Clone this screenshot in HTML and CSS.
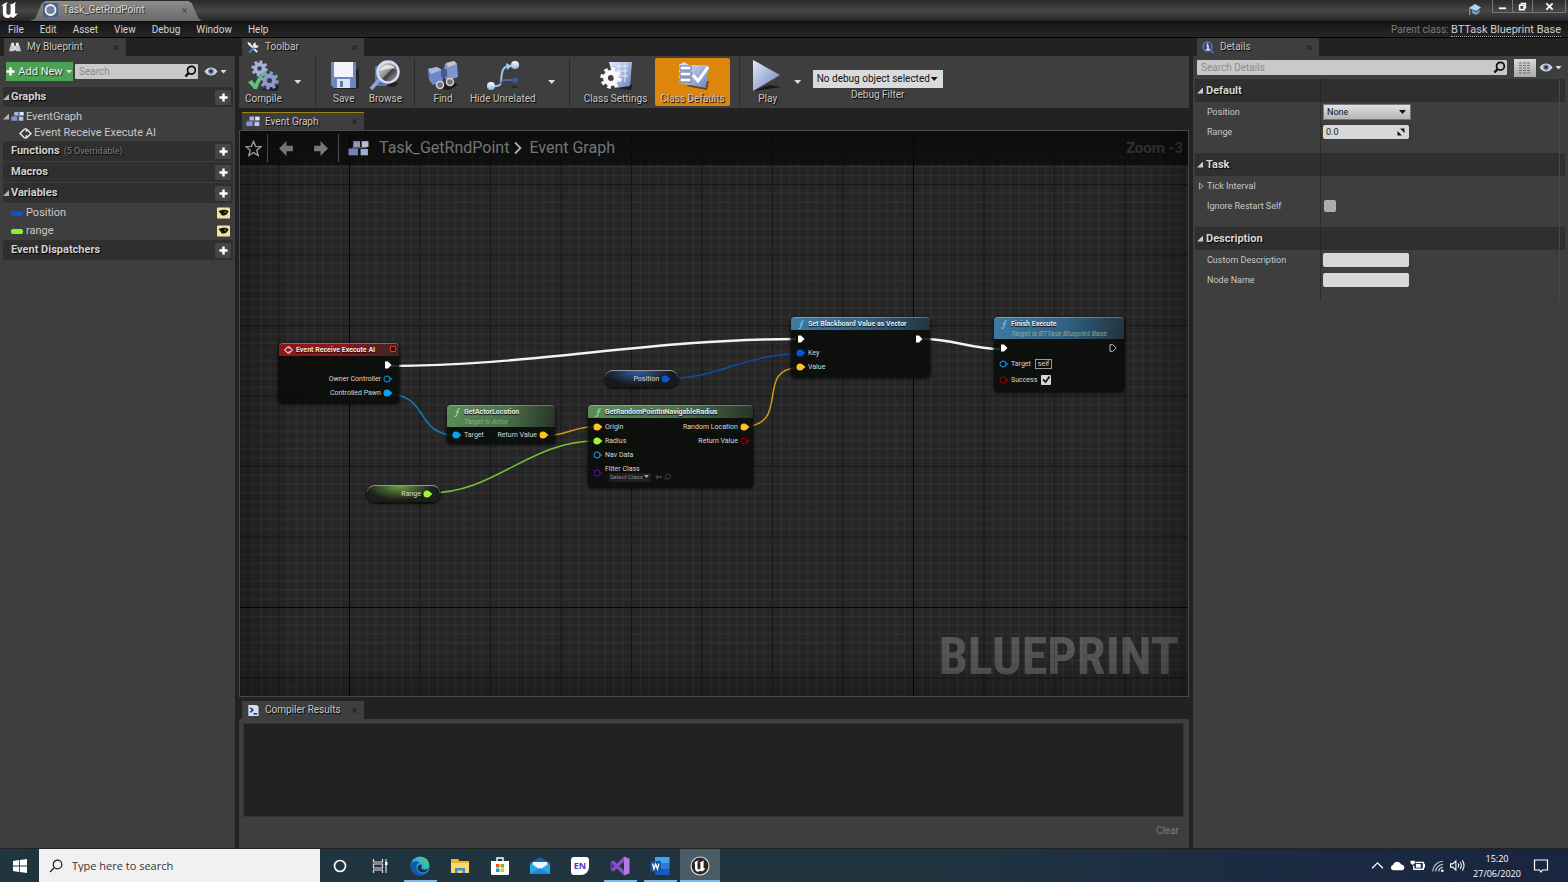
FILE: index.html
```
<!DOCTYPE html>
<html lang="en">
<head>
    <meta charset="UTF-8">
    <meta name="viewport" content="width=device-width, initial-scale=1.0">
    <title>Task_GetRndPoint</title>
    <link rel="stylesheet" href="styles.css">
</head>
<body>
    <!-- Shared symbols and gradients -->
    <svg class="defs" aria-hidden="true">
        <defs>
            <linearGradient id="steel" x1="0" y1="0" x2="1" y2="1">
                <stop offset="0" stop-color="#e4ebfa"/>
                <stop offset="1" stop-color="#6b80bd"/>
            </linearGradient>
            <linearGradient id="ball" x1="0" y1="0" x2="0" y2="1">
                <stop offset="0" stop-color="#ffffff"/>
                <stop offset="1" stop-color="#8fb4e0"/>
            </linearGradient>
            <linearGradient id="lens" x1="0" y1="0" x2="1" y2="1">
                <stop offset="0" stop-color="#f4f4f4"/>
                <stop offset="0.5" stop-color="#8a8a8a"/>
                <stop offset="0.55" stop-color="#3a3a3a"/>
                <stop offset="1" stop-color="#bdbdbd"/>
            </linearGradient>
            <linearGradient id="edge" x1="0" y1="1" x2="1" y2="0">
                <stop offset="0" stop-color="#1668c8"/>
                <stop offset="0.5" stop-color="#27a9e0"/>
                <stop offset="1" stop-color="#5bd86a"/>
            </linearGradient>
        </defs>
        <symbol id="i-close" viewBox="0 0 8 8"><path d="M1.5 1.5l5 5M6.5 1.5l-5 5" stroke="currentColor" stroke-width="1.2"/></symbol>
        <symbol id="i-plus" viewBox="0 0 10 10"><path d="M5 0.5v9M0.5 5h9" stroke="#fff" stroke-width="2.8"/></symbol>
        <symbol id="i-search" viewBox="0 0 14 14"><circle cx="8" cy="5.6" r="4.2" fill="none" stroke="#0a0a0a" stroke-width="1.8"/><path d="M5 8.6L1.6 12.4" stroke="#0a0a0a" stroke-width="2.6"/></symbol>
        <symbol id="i-eye" viewBox="0 0 16 10"><path d="M0.5 5C3 1.2 5.5 0.5 8 0.5S13 1.2 15.5 5C13 8.8 10.5 9.5 8 9.5S3 8.8 0.5 5z" fill="#d4d4d4"/><circle cx="8" cy="4.8" r="3.2" fill="#5e78a8"/><circle cx="8" cy="4.8" r="1.5" fill="#1d2740"/></symbol>
        <symbol id="i-eye-dark" viewBox="0 0 14 12"><rect width="14" height="12" rx="1" fill="#e9e6a4"/><path d="M1.5 4.5C4 2 9 1.6 12.500 4l-.6 1.200C11 8 8 9.200 5 8.400l-1-.8 1.200-.2C3.500 6.800 3 6 3 5.300z" fill="#141408"/><circle cx="8.800" cy="4.800" r=".7" fill="#e9e6a4"/></symbol>
        <symbol id="i-blocks" viewBox="0 0 20 16"><rect x="5" y="1" width="6.5" height="5.5" fill="#a9b7e2"/><rect x="13" y="1" width="6.5" height="5.5" fill="#dfe6fa"/><rect x="0.5" y="8" width="9" height="6.5" fill="#8395cf"/><rect x="12" y="8.5" width="7" height="6" fill="#b9c5ec"/><path d="M4 7.3h14" stroke="#8090c0"/></symbol>
        <symbol id="i-event" viewBox="0 0 14 12"><path d="M6 1L1 6l5 5M8 1l5 5-5 5" fill="none" stroke="#eee" stroke-width="1.6"/><path d="M8 1v3M8 8v3M6 1h2M6 11h2" stroke="#eee" stroke-width="1.6"/></symbol>
        <symbol id="i-ue" viewBox="0 0 20 20"><path d="M1 7C2.500 4 5 2.500 8 2.200c-1 1-1.600 1.800-1.600 3v7.600c0 1.300 1 2 2 2 .8 0 1.600-.4 2.200-1.200V6c0-.8-.5-1.200-1.300-1.400 2.400-.3 4.500-1.200 6.700-2.800-.6 1-.9 1.800-.9 3v7.400c0 1 .3 1.500 1.100 1.500.5 0 1-.3 1.600-.7-1.200 2.400-3 4.200-5.400 5l-1.600-1.600c-1 1-2 1.700-3.400 1.700-2.600 0-4.500-1.700-4.500-4.500V7c0-.9-.3-1.300-.8-1.300-.4 0-.8.4-1.100 1.300z" fill="currentColor"/></symbol>
        <symbol id="i-func" viewBox="0 0 8 10"><path d="M7.300 1.300C6 .4 5.200.8 4.900 2.300L3.700 7.800C3.400 9.300 2.400 9.700.9 8.900M2.400 4.200h3.700" fill="none" stroke="currentColor" stroke-width="1.3"/></symbol>
        <symbol id="pin-on" viewBox="0 0 10 8"><circle cx="4" cy="4" r="3.5" fill="currentColor"/><path d="M7 2l2.500 2L7 6z" fill="currentColor"/></symbol>
        <symbol id="pin-off" viewBox="0 0 10 8"><circle cx="4" cy="4" r="2.900" fill="#0008" stroke="currentColor" stroke-width="1.3"/><path d="M7.500 2.300L9.500 4 7.500 5.700z" fill="currentColor"/></symbol>
        <symbol id="exec-on" viewBox="0 0 10 8"><path d="M2 0.500h3L8.500 4 5 7.500H2z" fill="#fff"/></symbol>
        <symbol id="exec-off" viewBox="0 0 10 8"><path d="M2 0.700h2.800L8.200 4 4.800 7.300H2z" fill="none" stroke="#bbb"/></symbol>
        <symbol id="i-gear" viewBox="0 0 20 20"><circle cx="10" cy="10" r="8" fill="none" stroke="currentColor" stroke-width="3.5" stroke-dasharray="3.14 3.14"/><circle cx="10" cy="10" r="5" fill="none" stroke="currentColor" stroke-width="4.5"/></symbol>
    </svg>

    <header class="titlebar">
        <svg class="ue-logo" viewBox="0 0 20 20"><use href="#i-ue"/></svg>
        <div class="asset-tab">
            <svg width="15" height="14" viewBox="0 0 15 14"><rect width="15" height="14" fill="#456092"/><circle cx="7.5" cy="7" r="5" fill="#6f7f9c" stroke="#f2f2f2" stroke-width="1.8"/></svg>
            <span>Task_GetRndPoint</span>
            <button class="close" aria-label="Close"><svg><use href="#i-close"/></svg></button>
        </div>
        <div class="window-side">
            <svg class="cap" viewBox="0 0 14 14"><path d="M7 1l6 3.500L8 8 1 5z" fill="#b5d4f2"/><path d="M4 7l4 2 3.500-2.400v3.200L8 12l-4-2z" fill="#6f9bcb"/><path d="M1.800 5v7" stroke="#b48a5a" stroke-width="1.3"/></svg>
            <div class="window-buttons">
                <button aria-label="Minimize"><svg viewBox="0 0 10 10"><path d="M1 7h8" stroke="#fff" stroke-width="2"/></svg></button>
                <button aria-label="Restore"><svg viewBox="0 0 10 10"><path d="M3.500 3V1.500h5v5H7" fill="none" stroke="#fff" stroke-width="1.2"/><rect x="1.8" y="3.5" width="5" height="5" fill="none" stroke="#fff" stroke-width="1.8"/></svg></button>
                <button class="exit" aria-label="Close window"><svg viewBox="0 0 10 10"><path d="M1.500 1.500l7 7M8.500 1.500l-7 7" stroke="#fff" stroke-width="2"/></svg></button>
            </div>
        </div>
    </header>

    <nav class="menubar">
        <button>File</button>
        <button>Edit</button>
        <button>Asset</button>
        <button>View</button>
        <button>Debug</button>
        <button>Window</button>
        <button>Help</button>
        <p class="parent">Parent class: <a href="#">BTTask Blueprint Base</a></p>
    </nav>

    <main class="workspace">
        <!-- My Blueprint -->
        <section class="column">
            <div class="tab">
                <svg viewBox="0 0 14 14"><path d="M0.500 11l2-7L6 3v8zM8 3l3.500 1 2 7H8z" fill="#c9c9c9"/><path d="M3 2h3v3H3zM8 2h3v3H8zM6 5h2v5H6z" fill="#e6e6e6"/></svg>
                <h2>My Blueprint</h2>
                <button class="close" aria-label="Close"><svg><use href="#i-close"/></svg></button>
            </div>
            <div class="panel">
                <div class="search-row">
                    <button class="add-new"><svg viewBox="0 0 10 10"><use href="#i-plus"/></svg>Add New<i class="caret"></i></button>
                    <label class="search"><input type="text" placeholder="Search" aria-label="Search"><svg><use href="#i-search"/></svg></label>
                    <button class="view-options" aria-label="View options"><svg><use href="#i-eye"/></svg><i class="caret"></i></button>
                </div>
                <div class="group open"><h3>Graphs</h3><button aria-label="Add graph"><svg><use href="#i-plus"/></svg></button></div>
                <div class="tree open"><svg class="blocks"><use href="#i-blocks"/></svg>EventGraph</div>
                <div class="tree child"><svg class="event"><use href="#i-event"/></svg>Event Receive Execute AI</div>
                <div class="group"><h3>Functions</h3><small>(5 Overridable)</small><button aria-label="Add function"><svg><use href="#i-plus"/></svg></button></div>
                <div class="group"><h3>Macros</h3><button aria-label="Add macro"><svg><use href="#i-plus"/></svg></button></div>
                <div class="group open"><h3>Variables</h3><button aria-label="Add variable"><svg><use href="#i-plus"/></svg></button></div>
                <div class="variable"><i class="type key"></i>Position<button aria-label="Position visibility"><svg><use href="#i-eye-dark"/></svg></button></div>
                <div class="variable"><i class="type float"></i>range<button aria-label="range visibility"><svg><use href="#i-eye-dark"/></svg></button></div>
                <div class="group"><h3>Event Dispatchers</h3><button aria-label="Add dispatcher"><svg><use href="#i-plus"/></svg></button></div>
            </div>
        </section>

        <section class="column center">
            <!-- Toolbar -->
            <div class="tab">
                <svg viewBox="0 0 14 14"><path d="M3 3l8.500 9" stroke="#eee" stroke-width="2"/><path d="M1 1l3 1 1 2-1.500 1L2 4z" fill="#eee"/><path d="M11 4.500L3 12.500" stroke="#4d7fd0" stroke-width="2.2"/><path d="M10 1.500a3 3 0 1 0 3 3l-2 .6-1.400-1.500z" fill="#eee"/></svg>
                <h2>Toolbar</h2>
                <button class="close" aria-label="Close"><svg><use href="#i-close"/></svg></button>
            </div>
            <div class="toolbar">
                <button class="tool wide">
                    <svg viewBox="0 0 32 32"><path d="M12 30l18 1 3-6z" fill="#1f1f1f"/><svg x="4" y="0" width="17" height="17" color="#a3b3de"><use href="#i-gear"/></svg><svg x="13" y="11" width="19" height="19" color="#8b9bcf"><use href="#i-gear"/></svg><path d="M1 22l4-2 3 4c2-6 6-11 13-15-5 6-8 12-11 20H7z" fill="#5fc27b"/></svg>
                    Compile
                </button>
                <button class="more" aria-label="Compile options"><i class="caret"></i></button>
                <i class="rule"></i>
                <button class="tool">
                    <svg viewBox="0 0 32 32"><path d="M6 29h23l2-2V8z" fill="#222"/><path d="M3 2h25v26H6l-3-3z" fill="#6e85c3"/><path d="M6 2h19v15H6z" fill="#f1f4fc"/><path d="M9 19h13v9H9z" fill="#dbe2f4"/><path d="M12 21h3v6h-3z" fill="#6077b5"/></svg>
                    Save
                </button>
                <button class="tool">
                    <svg viewBox="0 0 32 32"><path d="M6 6h12v20H6z" fill="#5873b5"/><path d="M17 26l8 1 5-4-6-1z" fill="#1e1e1e"/><path d="M10 20L2 29" stroke="#8fa6d8" stroke-width="3.5"/><circle cx="19" cy="12" r="10.5" fill="url(#lens)" stroke="#d3dcf2" stroke-width="2.5"/><path d="M11 11c3-7 12-8 16-2-5-1-11 0-16 2z" fill="#fff" opacity="0.7"/></svg>
                    Browse
                </button>
                <i class="rule"></i>
                <button class="tool">
                    <svg viewBox="0 0 32 32"><path d="M8 28l14 2 9-5-6-4z" fill="#1d1d1d"/><path d="M1 9l9-2 5 3 1 12-10 3-4-5z" fill="#6f86c4"/><path d="M1 9l9-2 5 3-11 4z" fill="#a5b8e6"/><path d="M18 4l9-3 3 3 1 13-11 4-4-6z" fill="#8094cd"/><path d="M19 3l8-2 3 3-9 3z" fill="#d0bfc4"/><path d="M14 9h6v8h-6z" fill="#46598e"/><circle cx="13" cy="25" r="3.5" fill="#737373" stroke="#d2d2d2" stroke-width="1.5"/><circle cx="23" cy="22" r="3.5" fill="#737373" stroke="#d2d2d2" stroke-width="1.5"/></svg>
                    Find
                </button>
                <button class="tool wide">
                    <svg viewBox="0 0 32 32"><path d="M4 26c13 1 9-3 11-13 1-6 5-8 10-7" fill="none" stroke="#9cc6ea" stroke-width="2"/><path d="M13 24c2-5 6-4 12-4" fill="none" stroke="#5371a8" stroke-width="1.5"/><path d="M19 3l6 3-5 4z" fill="#9cc6ea"/><circle cx="4" cy="26" r="4" fill="url(#ball)"/><circle cx="28" cy="5" r="4" fill="url(#ball)"/><circle cx="28" cy="20" r="2.800" fill="#3d5b94"/><path d="M24 26l8 1-5 1z" fill="#1c1c1c"/></svg>
                    Hide Unrelated
                </button>
                <button class="more" aria-label="Hide options"><i class="caret"></i></button>
                <i class="rule"></i>
                <button class="tool wide">
                    <svg viewBox="0 0 32 32"><path d="M16 28l15 2 2-6z" fill="#1c1c1c"/><path d="M9 2h23l-2 24-14 2z" fill="url(#steel)"/><path d="M16 6h12M16 11h12M18 16h10M19 3v12M25 3v19" stroke="#e3eafa" stroke-width="1"/><svg x="0" y="7" width="22" height="22" color="#f7f7f7"><use href="#i-gear"/></svg></svg>
                    Class Settings
                </button>
                <button class="tool wide active">
                    <svg viewBox="0 0 32 32"><path d="M9 26l21 4 2-9z" fill="#6b4208"/><path d="M2 5l5-3 5 3h20l-3 23L2 23z" fill="url(#steel)"/><path d="M3 6h11v4H3zM3 12h11v4H3zM3 18h11v4H3z" fill="#fff" stroke="#5b6fa8"/><path d="M16 15l5 6L31 7" fill="none" stroke="#fff" stroke-width="3"/></svg>
                    Class Defaults
                </button>
                <i class="rule"></i>
                <button class="tool">
                    <svg viewBox="0 0 32 32"><path d="M2 31l27-4-12-2z" fill="#151515"/><path d="M1 0l27 15L1 31z" fill="url(#steel)"/></svg>
                    Play
                </button>
                <button class="more" aria-label="Play options"><i class="caret"></i></button>
                <div class="debug">
                    <span class="dropdown"><select id="debug"><option>No debug object selected</option></select></span>
                    <label for="debug">Debug Filter</label>
                </div>
            </div>

            <!-- Event Graph -->
            <div class="tab graph-tab">
                <svg viewBox="0 0 20 16"><use href="#i-blocks"/></svg>
                <h2>Event Graph</h2>
                <button class="close" aria-label="Close"><svg><use href="#i-close"/></svg></button>
            </div>
            <div class="graph">
                <svg class="grid">
                    <defs>
                        <pattern id="minor" x="109" y="53" width="70.5" height="70.5" patternUnits="userSpaceOnUse">
                            <path d="M9.300 0v71M18.100 0v71M26.900 0v71M35.700 0v71M44.600 0v71M53.400 0v71M62.200 0v71M0 9.300h71M0 18.100h71M0 26.900h71M0 35.700h71M0 44.600h71M0 53.400h71M0 62.200h71" stroke="#343434"/>
                            <path d="M0.500 0v71M0 0.500h71" stroke="#171717"/>
                        </pattern>
                        <pattern id="major" x="109" y="476" width="564" height="564" patternUnits="userSpaceOnUse">
                            <path d="M0.500 0v564M0 0.500h564" stroke="#050505"/>
                        </pattern>
                    </defs>
                    <rect width="100%" height="100%" fill="url(#minor)"/>
                    <rect width="100%" height="100%" fill="url(#major)"/>
                </svg>
                <div class="graph-header">
                    <svg class="star" viewBox="0 0 16 16"><path d="M8 1.200l2 4.800 5 .3-3.900 3.300 1.300 5L8 11.800l-4.400 2.800 1.300-5L1 6.300 6 6z" fill="none" stroke="#ccc" stroke-width="1.3"/></svg>
                    <i class="divider"></i>
                    <button aria-label="Back"><svg viewBox="0 0 16 16"><path d="M1 8l7-7v4.500h6v5H8V15z" fill="#8b8b8b"/></svg></button>
                    <button aria-label="Forward"><svg viewBox="0 0 16 16"><path d="M15 8L8 1v4.500H2v5h6V15z" fill="#8b8b8b"/></svg></button>
                    <i class="divider"></i>
                    <svg class="crumb-icon"><use href="#i-blocks"/></svg>
                    <span>Task_GetRndPoint</span>
                    <svg class="chevron" viewBox="0 0 8 14"><path d="M1 1.500L6.500 7 1 12.500" fill="none" stroke="#ccc" stroke-width="1.8"/></svg>
                    <span>Event Graph</span>
                    <b>Zoom -3</b>
                </div>
                <strong class="watermark">BLUEPRINT</strong>

                <svg class="wires">
                    <path d="M151 235C290 235 410 208 556 208" stroke="#f2f2f2" stroke-width="2.4"/>
                    <path d="M684 208C712 208 732 218 760 218" stroke="#f2f2f2" stroke-width="2.4"/>
                    <path d="M150 263.500C188 263.500 176 304.500 216 304.500" stroke="#0a83c6"/>
                    <path d="M306 304.500C326 304.500 334 295.500 356 295.500" stroke="#cf9b1d"/>
                    <path d="M189 362C256 362 288 310 356 310" stroke="#77c23a"/>
                    <path d="M427 247.500C480 247.500 504 223 558 223" stroke="#0c4dac"/>
                    <path d="M503 295.500C552 295.500 514 237 558 237" stroke="#cf9b1d"/>
                </svg>

                <article class="node n-event">
                    <header class="red"><svg class="event"><use href="#i-event"/></svg><h4>Event Receive Execute AI</h4><i class="delegate"></i></header>
                    <div class="pin out"><svg><use href="#exec-on"/></svg></div>
                    <div class="pin out object">Owner Controller<svg><use href="#pin-off"/></svg></div>
                    <div class="pin out object-on">Controlled Pawn<svg><use href="#pin-on"/></svg></div>
                </article>

                <article class="node n-actor">
                    <header class="green tall"><svg><use href="#i-func"/></svg><h4>GetActorLocation<em>Target is Actor</em></h4></header>
                    <div class="pins">
                        <div class="pin object-on"><svg><use href="#pin-on"/></svg>Target</div>
                        <div class="pin out vector">Return Value<svg><use href="#pin-on"/></svg></div>
                    </div>
                </article>

                <article class="node n-random">
                    <header class="green"><svg><use href="#i-func"/></svg><h4>GetRandomPointInNavigableRadius</h4></header>
                    <div class="pins">
                        <div>
                            <div class="pin vector"><svg><use href="#pin-on"/></svg>Origin</div>
                            <div class="pin float"><svg><use href="#pin-on"/></svg>Radius</div>
                            <div class="pin object"><svg><use href="#pin-off"/></svg>Nav Data</div>
                            <div class="pin class"><svg><use href="#pin-off"/></svg>
                                <div>
                                    <label for="filter">Filter Class</label>
                                    <div class="picker">
                                        <span class="dropdown"><select id="filter"><option>Select Class</option></select></span>
                                        <svg class="picker-icons" viewBox="0 0 18 8"><path d="M1 4l3-3v2h4v2H4v2z" fill="#3c3c3c"/><circle cx="14" cy="3.5" r="2.5" fill="none" stroke="#3c3c3c"/><path d="M12 5.500L10.500 7" stroke="#3c3c3c"/></svg>
                                    </div>
                                </div>
                            </div>
                        </div>
                        <div>
                            <div class="pin out vector">Random Location<svg><use href="#pin-on"/></svg></div>
                            <div class="pin out bool">Return Value<svg><use href="#pin-off"/></svg></div>
                        </div>
                    </div>
                </article>

                <article class="node n-set">
                    <header class="blue"><svg><use href="#i-func"/></svg><h4>Set Blackboard Value as Vector</h4></header>
                    <div class="pins">
                        <div>
                            <div class="pin"><svg><use href="#exec-on"/></svg></div>
                            <div class="pin key"><svg><use href="#pin-on"/></svg>Key</div>
                            <div class="pin vector"><svg><use href="#pin-on"/></svg>Value</div>
                        </div>
                        <div class="pin out"><svg><use href="#exec-on"/></svg></div>
                    </div>
                </article>

                <article class="node roomy n-finish">
                    <header class="blue tall"><svg><use href="#i-func"/></svg><h4>Finish Execute<em>Target is BTTask Blueprint Base</em></h4></header>
                    <div class="pins">
                        <div>
                            <div class="pin"><svg><use href="#exec-on"/></svg></div>
                            <div class="pin object"><svg><use href="#pin-off"/></svg>Target<span class="self">self</span></div>
                            <div class="pin bool"><svg><use href="#pin-off"/></svg><label for="success">Success</label><input type="checkbox" id="success" checked></div>
                        </div>
                        <div class="pin out"><svg><use href="#exec-off"/></svg></div>
                    </div>
                </article>

                <div class="pill pill-key">Position<svg><use href="#pin-on"/></svg></div>
                <div class="pill pill-float">Range<svg><use href="#pin-on"/></svg></div>
            </div>

            <!-- Compiler Results -->
            <div class="tab results-tab">
                <svg viewBox="0 0 14 14"><path d="M2 1h9l2 2v10H2z" fill="#cfe0fa"/><path d="M4 4l3 2.500L4 9M7.500 10.500h4" fill="none" stroke="#1f2d4a" stroke-width="1.5"/></svg>
                <h2>Compiler Results</h2>
                <button class="close" aria-label="Close"><svg><use href="#i-close"/></svg></button>
            </div>
            <div class="results">
                <div class="log"></div>
                <button>Clear</button>
            </div>
        </section>

        <!-- Details -->
        <section class="column details">
            <div class="tab">
                <svg viewBox="0 0 14 14"><path d="M9 9l4 4" stroke="#3d6cc4" stroke-width="2"/><circle cx="6.5" cy="6" r="5" fill="#39496b" stroke="#5f86cc" stroke-width="1.2"/><path d="M5.500 5.300h1.500V9M5 9.200h4M6.500 2.600v1.500" fill="none" stroke="#fff" stroke-width="1.4"/></svg>
                <h2>Details</h2>
                <button class="close" aria-label="Close"><svg><use href="#i-close"/></svg></button>
            </div>
            <div class="panel">
                <div class="search-row">
                    <label class="search"><input type="text" placeholder="Search Details" aria-label="Search Details"><svg><use href="#i-search"/></svg></label>
                    <button class="matrix" aria-label="Property matrix"><svg viewBox="0 0 14 14"><path d="M1 2h12M1 4.500h12M1 7h12M1 9.500h12M1 12h12" stroke="#6e6e6e" stroke-dasharray="3 1"/></svg></button>
                    <button class="view-options" aria-label="View options"><svg><use href="#i-eye"/></svg><i class="caret"></i></button>
                </div>
                <div class="properties">
                    <fieldset>
                        <h3>Default</h3>
                        <div class="property"><label for="position">Position</label><span class="dropdown"><select id="position"><option>None</option></select></span></div>
                        <div class="property"><label for="range">Range</label><span class="spin"><input type="text" id="range" value="0.0"><svg viewBox="0 0 8 8"><path d="M3 0.500h4.500V5zM0.500 3v4.500H5z" fill="#111"/></svg></span></div>
                    </fieldset>
                    <fieldset>
                        <h3>Task</h3>
                        <div class="property nested"><svg viewBox="0 0 5 8"><path d="M0.500 1v6L4 4z" fill="none" stroke="#aaa"/></svg><span>Tick Interval</span></div>
                        <div class="property"><label for="ignore">Ignore Restart Self</label><input type="checkbox" id="ignore"></div>
                    </fieldset>
                    <fieldset>
                        <h3>Description</h3>
                        <div class="property"><label for="custom">Custom Description</label><input type="text" id="custom"></div>
                        <div class="property"><label for="node">Node Name</label><input type="text" id="node"></div>
                    </fieldset>
                </div>
            </div>
        </section>
    </main>

    <footer class="taskbar">
        <button class="start" aria-label="Start"><svg viewBox="0 0 14 14"><path d="M0 2l6-.9v5.500H0zM6.800 1L14 0v6.600H6.800zM0 7.400h6v5.500L0 12zM6.800 7.400H14V14l-7.200-1z" fill="#fff"/></svg></button>
        <label class="windows-search">
            <svg viewBox="0 0 14 14"><circle cx="8.5" cy="5.5" r="4.300" fill="none" stroke="#222" stroke-width="1.2"/><path d="M5.500 8.500L1 13" stroke="#222" stroke-width="1.2"/></svg>
            <input type="text" placeholder="Type here to search" aria-label="Type here to search">
        </label>
        <button aria-label="Cortana"><svg viewBox="0 0 20 20"><circle cx="10" cy="10" r="5.5" fill="none" stroke="#fff" stroke-width="1.7"/></svg></button>
        <button aria-label="Task View"><svg viewBox="0 0 20 20"><path d="M3.500 3v3h9V3M3.500 17v-3h9v3M3.500 8h9v4h-9zM16 3v14" fill="none" stroke="#ddd" stroke-width="1.2"/><path d="M15 6h2.500v3H15z" fill="#fff"/></svg></button>
        <button class="running" aria-label="Edge"><svg viewBox="0 0 20 20"><circle cx="10" cy="10" r="9.5" fill="url(#edge)"/><path d="M0.600 9c2-4 6-4.500 9-2.500-3 1-4 4-2.600 7.500 1.300 3 5 4.500 9 2.500-2 2.500-5 3.400-7.500 3C3.500 18.500 0 14 0.600 9z" fill="#0f57b0"/><path d="M10.500 8.300c2 1 1.400 2.500.8 3.200-.8 2 4 3 7.700.5-1 1.800-2.400 3.600-4 4.200-4 1-7-1-7.400-3.600-.2-2 .9-3.700 2.900-4.300z" fill="#20343e"/></svg></button>
        <button aria-label="File Explorer"><svg viewBox="0 0 20 20"><path d="M1 3h7l1.500 2H19v12H1z" fill="#f0b32e"/><path d="M1 7h18v10H1z" fill="#ffd766"/><path d="M5 12h10v5h-2.500v-2.500h-5V17H5z" fill="#3a8ed4"/></svg></button>
        <button aria-label="Store"><svg viewBox="0 0 20 20"><path d="M7 5V2h6v3" fill="none" stroke="#fff" stroke-width="1.4"/><path d="M1 5h18v12.500q0 1.500-1.500 1.500h-15Q1 19 1 17.500z" fill="#fff"/><path d="M6 8h3.500v3.500H6z" fill="#f25022"/><path d="M10.500 8H14v3.500h-3.500z" fill="#7fba00"/><path d="M6 12.500h3.500V16H6z" fill="#00a4ef"/><path d="M10.500 12.500H14V16h-3.500z" fill="#ffb900"/></svg></button>
        <button aria-label="Mail"><svg viewBox="0 0 20 20"><path d="M0 7l10-6 10 6v11H0z" fill="#1565b3"/><path d="M2.500 6h15v7h-15z" fill="#eef6fd"/><path d="M0 7l10 6.500L20 7v11H0z" fill="#2aa7e8"/><path d="M0 18l10-6 10 6z" fill="#1a8ad6"/></svg></button>
        <button aria-label="Endnote"><span class="endnote">EN</span></button>
        <button class="running" aria-label="Visual Studio"><svg viewBox="0 0 20 20"><path d="M14 0.500l5.500 2.300v14.400L14 19.500z" fill="#b17be0"/><path d="M14 0.500v5L3.500 15.500 0.500 14zM0.500 6l3-1.500L14 14.500v5z" fill="#8750c8"/><path d="M0.500 6v8l2-1.500v-5z" fill="#6a38a8"/></svg></button>
        <button class="running" aria-label="Word"><svg viewBox="0 0 20 20"><path d="M5 1h14.500v6H5z" fill="#41a5ee"/><path d="M5 7h14.500v6H5z" fill="#2b7cd3"/><path d="M5 13h14.500v6H5z" fill="#185abd"/><rect x="0.5" y="5" width="10.5" height="10.5" rx="1" fill="#1750a8"/><path d="M2.500 7.500L4 13l1.700-5L7.500 13 9 7.500" fill="none" stroke="#fff" stroke-width="1.3"/></svg></button>
        <button class="running current" aria-label="Unreal Engine"><svg viewBox="0 0 20 20"><circle cx="10" cy="10" r="9" fill="#2a2624" stroke="#ddd" stroke-width="1.2"/><svg x="3" y="3" width="14" height="14" color="#fff"><use href="#i-ue"/></svg></svg></button>
        <div class="tray">
            <svg viewBox="0 0 14 14"><path d="M2 9.500l5-5 5 5" fill="none" stroke="#fff" stroke-width="1.2"/></svg>
            <svg viewBox="0 0 14 14"><path d="M3 11.500a2.700 2.700 0 0 1 0-5.300A4 4 0 0 1 10.500 6a2.800 2.800 0 0 1 .8 5.500z" fill="#fff"/></svg>
            <svg viewBox="0 0 14 14"><path d="M5 4h7.500v6.500H3.500V7M12.500 6h1v2.500h-1" fill="none" stroke="#fff" stroke-width="1.2"/><path d="M5.500 5.500h4.500V9H5.500z" fill="#fff"/><path d="M0.500 2.500h4v2.500l-2 1.500-2-1.500z" fill="#fff"/></svg>
            <svg viewBox="0 0 14 14"><path d="M2.500 12.500A10 10 0 0 1 12 3M5.200 12.500A7.300 7.300 0 0 1 12 6M8 12.500a4.500 4.500 0 0 1 4-3.800" fill="none" stroke="#ccd" stroke-width="1.1"/><circle cx="11.5" cy="12" r="1.200" fill="#fff"/></svg>
            <svg viewBox="0 0 14 14"><path d="M0.500 5.500h2l3-2.700v8.400l-3-2.700h-2zM7.500 5.200q1.200 1.800 0 3.600M9.500 3.700q2.200 3.300 0 6.600M11.500 2.200q3.200 4.800 0 9.600" fill="none" stroke="#fff"/></svg>
            <time>15:20<br>27/06/2020</time>
            <svg class="notify" viewBox="0 0 16 16"><path d="M1.500 2h13v10h-5L8 14l-1.500-2h-5z" fill="none" stroke="#fff" stroke-width="1.2"/></svg>
        </div>
    </footer>
</body>
</html>
```
FILE: styles.css
```
* {
    box-sizing: border-box;
}
body {
    margin: 0;
    height: 100vh;
    display: flex;
    flex-direction: column;
    overflow: hidden;
    background: #222;
    color: #c8c8c8;
    font-family: Roboto, sans-serif;
    font-size: 10px;
    line-height: 12px;
}
button, input, select {
    font: inherit;
    color: inherit;
    margin: 0;
    padding: 0;
    border: 0;
    background: none;
    border-radius: 0;
}
button {
    display: flex;
    align-items: center;
    justify-content: center;
    flex-shrink: 0;
    text-shadow: inherit;
}
svg {
    flex-shrink: 0;
}
h2, h3, h4, p {
    margin: 0;
    font-size: inherit;
    font-weight: normal;
}
.defs {
    position: absolute;
    width: 0;
    height: 0;
}
.caret {
    width: 7px;
    height: 4px;
    background: #ddd;
    clip-path: polygon(0 0, 100% 0, 50% 100%);
}
.close {
    margin-left: auto;
    color: #222;
}
.close svg {
    width: 7px;
    height: 7px;
}

/* Title bar and menu */
.titlebar {
    display: flex;
    height: 22px;
    background: linear-gradient(#2a2a2a, #474747 50%, #262626);
    border-bottom: 1px solid #0c0c0c;
}
.ue-logo {
    width: 20px;
    height: 20px;
    color: #fff;
}
.asset-tab {
    display: flex;
    align-items: center;
    gap: 5px;
    width: 172px;
    margin: 1px 0 0 10px;
    padding: 0 14px 2px 13px;
    background: linear-gradient(#8c8c8c, #6a6a6a);
    clip-path: polygon(0 100%, 3% 88%, 7% 10%, 9% 0, 92% 0, 94% 10%, 98% 88%, 100% 100%);
    color: #d8d8d8;
    text-shadow: 1px 1px 1px #222;
}
.asset-tab .close {
    color: #4c4c4c;
}
.window-side {
    display: flex;
    gap: 10px;
    margin-left: auto;
    padding-right: 2px;
}
.cap {
    width: 14px;
    height: 14px;
    margin-top: 3px;
}
.window-buttons {
    display: flex;
    height: 13px;
    border: 1px solid #777;
    border-top: 0;
}
.window-buttons button {
    width: 20px;
    border-right: 1px solid #777;
}
.window-buttons .exit {
    width: 32px;
    border: 0;
}
.window-buttons svg {
    width: 9px;
    height: 9px;
}
.menubar {
    display: flex;
    align-items: center;
    gap: 16px;
    height: 16px;
    padding: 0 7px 0 8px;
    background: linear-gradient(#161616, #262626);
    border-bottom: 1px solid #000;
    color: #d4d4d4;
}
.parent {
    margin-left: auto;
    color: #7b7b7b;
}
.parent a {
    font-size: 11px;
    color: #d0d0d0;
    text-decoration: none;
    border-bottom: 1px dotted #aaa;
}

/* Docked panels */
.workspace {
    flex: 1;
    min-height: 0;
    display: grid;
    grid-template-columns: 235px minmax(0, 1fr) 375px;
    gap: 4px;
}
.column {
    display: flex;
    flex-direction: column;
    min-width: 0;
}
.tab {
    display: flex;
    align-items: center;
    gap: 5px;
    width: 122px;
    height: 18px;
    margin-left: 4px;
    padding: 0 6px 0 4px;
    background: #3e3e3e;
    text-shadow: 1px 1px 1px #000;
    flex-shrink: 0;
}
.center .tab {
    margin-left: 3px;
}
.tab > svg {
    width: 14px;
    height: 13px;
}
.panel {
    flex: 1;
    padding: 0 2px 0 3px;
    background: #3e3e3e;
}
.search-row {
    display: flex;
    align-items: center;
    gap: 2px;
    height: 31px;
    padding: 0 6px 0 3px;
}
.add-new {
    gap: 3px;
    width: 67px;
    height: 19px;
    background: #4aa352;
    font-size: 11px;
    color: #eee;
    text-shadow: 1px 1px 1px #222;
}
.add-new svg {
    width: 9px;
    height: 9px;
}
.search {
    flex: 1;
    min-width: 0;
    display: flex;
    align-items: center;
    height: 15px;
    padding: 0 1px 0 4px;
    background: #c9c9c9;
    border-radius: 1px;
}
.search input {
    flex: 1;
    min-width: 0;
    color: #222;
    outline: 0;
}
.search input::placeholder {
    color: #8b8b8b;
}
.search svg {
    width: 13px;
    height: 13px;
}
.view-options {
    gap: 2px;
    margin-left: 4px;
}
.view-options svg {
    width: 14px;
    height: 9px;
}

/* My Blueprint list */
.group {
    display: flex;
    align-items: center;
    gap: 4px;
    height: 20px;
    margin-bottom: 1px;
    padding: 0 2px 0 8px;
    background: #2f2f2f;
    border-radius: 2px;
    text-shadow: 1px 1px 1px #000;
}
.group h3 {
    font-size: 11px;
    font-weight: bold;
    color: #d2d2d2;
}
.group small {
    font-size: 9px;
    color: #808080;
}
.group button {
    width: 16px;
    height: 15px;
    margin-left: auto;
    background: #454545;
    border-radius: 1px;
}
.group button svg {
    width: 9px;
    height: 9px;
}
.open::before {
    content: "";
    width: 6px;
    height: 6px;
    background: #b4b4b4;
    clip-path: polygon(100% 0, 100% 100%, 0 100%);
}
.group.open {
    padding-left: 0;
    gap: 2px;
}
.tree, .variable {
    display: flex;
    align-items: center;
    gap: 2px;
    height: 17px;
    font-size: 11px;
}
.tree.child {
    padding-left: 16px;
    height: 16px;
}
.blocks {
    width: 13px;
    height: 11px;
}
.event {
    width: 13px;
    height: 11px;
}
.variable {
    gap: 3px;
    height: 18px;
    padding: 0 3px 0 8px;
}
.variable button {
    margin-left: auto;
}
.variable svg {
    width: 13px;
    height: 12px;
}
.type {
    width: 12px;
    height: 5px;
    border-radius: 2px;
    background: #0a55c8;
}
.type.float {
    background: #93ee3c;
}

/* Toolbar */
.toolbar {
    display: flex;
    align-items: stretch;
    gap: 3px;
    height: 52px;
    padding: 2px 1px;
    background: #3e3e3e;
    text-shadow: 1px 1px 1px #000;
}
.tool {
    flex-direction: column;
    gap: 1px;
    padding: 0 3px;
}
.tool.wide {
    padding: 0 5px;
}
.tool > svg {
    width: 32px;
    height: 32px;
}
.tool.active {
    background: #dd860c;
    border-radius: 2px;
}
.more {
    width: 16px;
}
.rule {
    width: 1px;
    margin: 0 6px;
    background: #2a2a2a;
}
.debug {
    display: flex;
    flex-direction: column;
    align-items: center;
    gap: 1px;
    margin: 12px 0 0 4px;
}
.dropdown {
    position: relative;
    display: inline-flex;
}
.dropdown select {
    width: 100%;
    appearance: none;
    color: #111;
    outline: 0;
}
.dropdown::after {
    content: "";
    position: absolute;
    right: 5px;
    top: calc(50% - 2px);
    width: 7px;
    height: 4px;
    background: #111;
    clip-path: polygon(0 0, 100% 0, 50% 100%);
    pointer-events: none;
}
.debug select {
    width: 130px;
    height: 18px;
    padding-left: 4px;
    background: #dadada;
}

/* Graph canvas */
.graph-tab {
    margin-top: 4px;
    border-top: 1px solid #9a8615;
}
.graph {
    position: relative;
    flex: 1;
    min-height: 0;
    overflow: hidden;
    border: 1px solid #484848;
    background: #262626;
}
.grid, .wires {
    position: absolute;
    inset: 0;
    width: 100%;
    height: 100%;
}
.wires {
    fill: none;
    stroke-width: 1.5px;
}
.graph::after {
    content: "";
    position: absolute;
    inset: 0;
    box-shadow: inset 0 0 60px rgba(0, 0, 0, 0.5);
    pointer-events: none;
}
.graph-header {
    position: relative;
    display: flex;
    align-items: center;
    height: 34px;
    padding: 0 5px;
    background: rgba(8, 8, 8, 0.7);
    font-size: 16px;
    line-height: 18px;
    color: #8a8a8a;
}
.star {
    width: 17px;
    height: 17px;
    margin-right: 4px;
}
.graph-header button {
    width: 34px;
}
.graph-header button svg {
    width: 17px;
    height: 19px;
}
.divider {
    width: 1px;
    height: 28px;
    margin: 0 1px;
    background: #5c5c5c;
}
.crumb-icon {
    width: 21px;
    height: 17px;
    margin: 0 10px 0 8px;
}
.chevron {
    width: 8px;
    height: 14px;
    margin: 0 7px 0 5px;
}
.graph-header b {
    margin-left: auto;
    font-size: 15px;
    color: #3a3a3a;
}
.watermark {
    position: absolute;
    right: 9px;
    bottom: 8px;
    font-family: "Roboto Condensed", "Liberation Sans Narrow", Roboto, sans-serif;
    font-size: 52px;
    line-height: 62px;
    color: rgba(255, 255, 255, 0.22);
}

/* Nodes */
.node {
    position: absolute;
    padding-bottom: 3px;
    border-radius: 4px;
    background: rgba(10, 13, 10, 0.88);
    box-shadow: 0 1px 3px 1px rgba(0, 0, 0, 0.7);
    font-size: 7px;
    line-height: 8px;
    color: #d8d8d8;
    white-space: nowrap;
}
.node header {
    display: flex;
    gap: 3px;
    height: 13px;
    margin-bottom: 2px;
    padding: 2px 3px 0 6px;
    border-radius: 4px 4px 0 0;
    border-top: 1px solid rgba(255, 255, 255, 0.3);
    color: #8fe08a;
}
.node header svg {
    width: 8px;
    height: 9px;
}
.node header.tall {
    height: 22px;
    margin-bottom: 1px;
}
.node h4 {
    font-weight: bold;
    color: #ececec;
    text-shadow: 0 1px 1px #000;
}
.node em {
    display: block;
    margin-top: 2px;
    font-weight: normal;
    color: #93a68a;
    text-shadow: none;
}
.red {
    background: linear-gradient(90deg, #98161b, #8a181c 55%, #3a2525);
}
.green {
    background: linear-gradient(100deg, #5c8a5b, #4a7148 55%, #273327);
}
.node .blue {
    background: linear-gradient(100deg, #3f7ba1, #2f6183 55%, #22333d);
    color: #62c1f2;
}
.delegate {
    width: 6px;
    height: 6px;
    margin-left: auto;
    border: 1px solid #f0333a;
    background: #300;
    border-radius: 1px;
}
.pins {
    display: flex;
    justify-content: space-between;
}
.pin {
    display: flex;
    align-items: center;
    gap: 2px;
    height: 14px;
    padding: 0 6px 0 5px;
}
.roomy .pin {
    height: 16px;
}
.out {
    justify-content: flex-end;
}
.pin > svg, .pill svg {
    width: 10px;
    height: 8px;
}
.object svg {
    color: #0a84c6;
}
.object-on svg {
    color: #06a4f2;
}
.vector svg {
    color: #fdc41f;
}
.pin.float svg, .pill-float svg {
    color: #9bf53c;
}
.key svg, .pill-key svg {
    color: #0557d2;
}
.bool svg {
    color: #8f0307;
}
.class > svg {
    color: #4c0a9c;
}
.pin.class {
    height: 22px;
}
.picker {
    display: flex;
    gap: 3px;
    padding-left: 4px;
}
.picker select {
    width: 42px;
    height: 9px;
    padding-left: 1px;
    font-size: 6px;
    color: #8a8a8a;
    background: #1d1f1d;
}
.picker .dropdown::after {
    right: 2px;
    width: 5px;
    height: 3px;
    background: #aaa;
}
.picker-icons {
    width: 18px;
    height: 8px;
}
.self {
    margin-left: 2px;
    padding: 0 2px;
    border: 1px solid #999;
}
.node input {
    appearance: none;
    width: 10px;
    height: 10px;
    margin-left: 2px;
    border-radius: 1px;
    background: #d6d6d6;
}
.node input:checked::before {
    content: "";
    display: block;
    width: 8px;
    height: 8px;
    margin: 1px;
    background: #111;
    clip-path: polygon(0 50%, 18% 34%, 40% 58%, 82% 0, 100% 14%, 42% 92%);
}
.n-event {
    left: 39px;
    top: 212px;
    width: 120px;
}
.n-event header {
    padding-left: 5px;
}
.n-event header .event {
    width: 9px;
    height: 8px;
}
.n-actor {
    left: 207px;
    top: 274px;
    width: 108px;
    padding-bottom: 1px;
}
.n-random {
    left: 348px;
    top: 274px;
    width: 165px;
}
.n-set {
    left: 551px;
    top: 186px;
    width: 139px;
}
.n-finish {
    left: 754px;
    top: 186px;
    width: 130px;
}
.pill {
    position: absolute;
    display: flex;
    align-items: center;
    justify-content: flex-end;
    gap: 2px;
    width: 73px;
    height: 17px;
    padding-right: 7px;
    border-radius: 8px;
    border-top: 1px solid #999;
    background: radial-gradient(ellipse 34px 14px at 45% 0, #2f62a8, #17191d);
    box-shadow: 0 1px 2px 1px rgba(0, 0, 0, 0.7);
    font-size: 7px;
    color: #d8d8d8;
}
.pill-key {
    left: 365px;
    top: 239px;
}
.pill-float {
    left: 127px;
    top: 354px;
    background: radial-gradient(ellipse 34px 14px at 45% 0, #6ba042, #1b1e19);
}

/* Compiler results */
.results-tab {
    margin-top: 4px;
}
.results {
    display: flex;
    flex-direction: column;
    height: 129px;
    padding: 4px 5px 0 4px;
    background: #3e3e3e;
    flex-shrink: 0;
}
.log {
    height: 94px;
    background: #222;
    border: 1px solid #333;
}
.results button {
    align-self: flex-end;
    margin: 8px 5px 0 0;
    color: #7c7c7c;
}

/* Details */
.details .panel {
    padding: 0 3px 0 2px;
}
.details .search-row {
    height: 23px;
    padding: 0 3px 0 2px;
}
.details .view-options {
    margin-left: 1px;
}
.matrix {
    width: 22px;
    height: 18px;
    margin-left: 5px;
    background: linear-gradient(#d8d8d8, #ababab);
}
.matrix svg {
    width: 14px;
    height: 14px;
}
.properties {
    position: relative;
    background: linear-gradient(#2d2d2d, #2d2d2d) 125px 0 / 1px 100% no-repeat;
}
.properties::after {
    content: "";
    position: absolute;
    right: 5px;
    top: 0;
    bottom: 0;
    width: 1px;
    background: #484848;
}
.properties fieldset {
    min-width: 0;
    margin: 0;
    padding: 0 0 11px;
    border: 0;
}
.properties h3 {
    display: flex;
    align-items: center;
    gap: 3px;
    height: 23px;
    padding-left: 2px;
    background: linear-gradient(#252525, #252525) 125px 0 / 1px 100% no-repeat #2f2f2f;
    font-size: 11px;
    font-weight: bold;
    color: #d8d8d8;
    text-shadow: 1px 1px 1px #000;
}
.properties h3::before {
    content: "";
    width: 6px;
    height: 6px;
    background: #ccc;
    clip-path: polygon(100% 0, 100% 100%, 0 100%);
}
.property {
    display: grid;
    grid-template-columns: 116px auto;
    justify-content: start;
    align-items: center;
    height: 20px;
    padding-left: 12px;
    font-size: 9px;
}
.nested {
    grid-template-columns: 8px auto;
    padding-left: 4px;
}
.nested svg {
    width: 5px;
    height: 8px;
}
.property input[type="text"] {
    width: 86px;
    height: 14px;
    padding: 0 3px;
    border-radius: 2px;
    background: #d8d8d8;
    color: #222;
    outline: 0;
}
.property input[type="checkbox"] {
    appearance: none;
    width: 12px;
    height: 12px;
    margin-left: 1px;
    border-radius: 2px;
    background: #adadad;
}
.property select {
    width: 88px;
    height: 16px;
    padding-left: 3px;
    border: 1px solid #777;
    background: linear-gradient(#e2e2e2, #b4b4b4);
}
.spin {
    position: relative;
}
.spin svg {
    position: absolute;
    right: 4px;
    top: 3px;
    width: 8px;
    height: 8px;
}

/* Windows taskbar */
.taskbar {
    display: flex;
    height: 33px;
    margin-top: 1px;
    background: linear-gradient(90deg, #20353f, #203440 60%, #1b2b42 80%, #1a2540);
    font-family: "Open Sans", sans-serif;
    color: #fff;
}
.taskbar > button {
    width: 40px;
}
.taskbar > button > svg {
    width: 20px;
    height: 20px;
}
.taskbar > .start {
    width: 39px;
}
.taskbar > .start > svg {
    width: 14px;
    height: 14px;
}
.windows-search {
    display: flex;
    align-items: center;
    gap: 9px;
    width: 281px;
    padding: 0 10px;
    background: #f1f1f1;
}
.windows-search svg {
    width: 14px;
    height: 14px;
}
.windows-search input {
    flex: 1;
    min-width: 0;
    font-size: 11px;
    color: #333;
    outline: 0;
}
.windows-search input::placeholder {
    color: #333;
}
.running {
    background: linear-gradient(#76b9ed, #76b9ed) center bottom / 33px 2px no-repeat;
}
.current {
    background-color: #4b5c66;
    background-size: 100% 2px;
}
.endnote {
    width: 18px;
    padding: 3px 0;
    border-radius: 3px 3px 8px 3px;
    background: #fff;
    color: #5a2fd0;
    font-size: 9px;
    font-weight: bold;
}
.tray {
    display: flex;
    align-items: center;
    gap: 5px;
    margin-left: auto;
    padding-right: 19px;
}
.tray svg {
    width: 15px;
    height: 15px;
}
.tray time {
    width: 50px;
    margin-left: 2px;
    font-size: 9px;
    line-height: 15px;
    text-align: center;
}
.tray .notify {
    width: 16px;
    height: 16px;
    margin-left: 6px;
}
```
